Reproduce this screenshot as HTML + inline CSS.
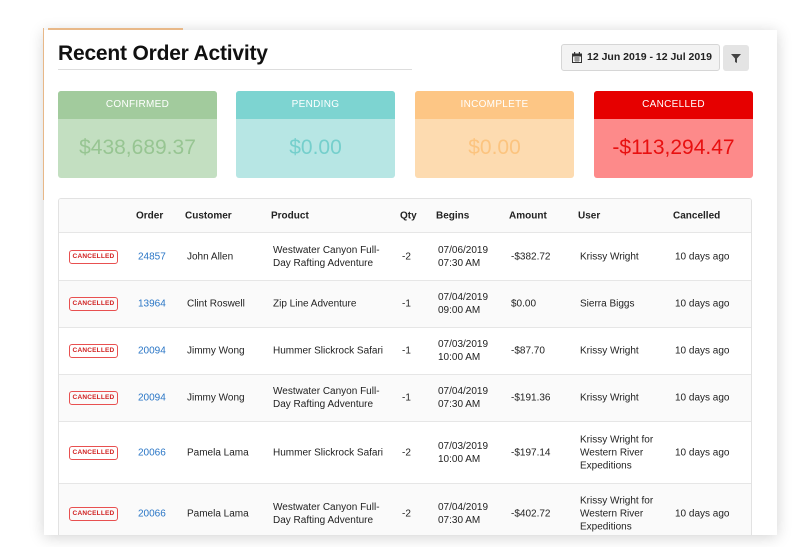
<!DOCTYPE html>
<html><head><meta charset="utf-8"><style>
*{margin:0;padding:0;box-sizing:border-box}
body{width:794px;height:547px;background:#fff;font-family:"Liberation Sans",sans-serif;position:relative;overflow:hidden;color:#222}
.card{position:absolute;left:44px;top:30px;width:733px;height:505px;background:#fff;box-shadow:0 2px 14px rgba(0,0,0,.18)}
.oline{position:absolute;left:43px;top:28px;width:1px;height:172px;background:#e8b888}
.otop{position:absolute;left:48px;top:28px;width:135px;height:2px;background:#e8b888}
h1{position:absolute;left:58px;top:42px;font-size:21px;font-weight:bold;color:#111;letter-spacing:-.2px}
.hl{position:absolute;left:58px;top:69px;width:354px;height:1px;background:#ddd}
.date{position:absolute;left:561px;top:44px;width:159px;height:27px;border:1px solid #d6d6d6;border-radius:3px;background:#f3f3f3;font-size:10.5px;font-weight:bold;line-height:25px;padding-left:25px}
.date svg{position:absolute;left:10px;top:7px}
.filt{position:absolute;left:723px;top:45px;width:26px;height:26px;background:#e4e4e4;border-radius:3px}
.filt svg{position:absolute;left:8px;top:8px}
.box{position:absolute;top:91px;width:159px;height:87px;border-radius:3px;overflow:hidden;text-align:center}
.box .t{height:28px;line-height:28px;font-size:10px;color:#fff;letter-spacing:.3px}
.box .v{height:59px;line-height:58px;font-size:21px}
.tbl{position:absolute;left:58px;top:198px;width:694px;height:337px;border:1px solid #e2e2e2;border-bottom:none;border-radius:3px 3px 0 0;overflow:hidden}
.row{position:absolute;left:0;width:694px;border-top:1px solid #e6e6e6;font-size:10px}
.row div{position:absolute;top:50%;transform:translateY(-50%);line-height:13px}
.hd div{font-weight:bold;font-size:10px}
.badge{left:10px;width:49px;height:14px;border:1px solid #e85050;border-radius:3px;color:#d02020;font-size:6.5px;font-weight:bold;text-align:center;line-height:12px!important;letter-spacing:.2px}
.o{color:#2a76c6}
</style></head><body>
<div class="card"></div>
<div class="oline"></div><div class="otop"></div>
<h1>Recent Order Activity</h1>
<div class="hl"></div>
<div class="date"><svg width="10" height="11" viewBox="0 0 10 11"><rect x="0.5" y="2" width="9" height="8.5" fill="none" stroke="#333"/><rect x="0.5" y="2" width="9" height="2.5" fill="#333"/><rect x="2" y="0" width="1.2" height="3" fill="#333"/><rect x="6.8" y="0" width="1.2" height="3" fill="#333"/><path d="M2 6h6M2 8h6M4 5v5M6 5v5" stroke="#333" stroke-width=".6"/></svg>12 Jun 2019 - 12 Jul 2019</div>
<div class="filt"><svg width="10" height="10" viewBox="0 0 10 10"><path d="M0 1h10L6 5.5V10L4 9V5.5z" fill="#444"/></svg></div>
<div class="box" style="left:58px;background:#c3dfc1"><div class="t" style="background:#a2cb9d">CONFIRMED</div><div class="v" style="color:#97c592">$438,689.37</div></div>
<div class="box" style="left:236px;background:#b7e6e4"><div class="t" style="background:#7dd4d1">PENDING</div><div class="v" style="color:#75cfcc">$0.00</div></div>
<div class="box" style="left:415px;background:#fddbb0"><div class="t" style="background:#fdc685">INCOMPLETE</div><div class="v" style="color:#fcc47f">$0.00</div></div>
<div class="box" style="left:594px;background:#fd8a8a"><div class="t" style="background:#e60000">CANCELLED</div><div class="v" style="color:#e81010">-$113,294.47</div></div>
<div class="tbl">
<div class="row hd" style="top:0;height:33px;border-top:none;background:#fafafa"><div style="left:77px">Order</div><div style="left:126px">Customer</div><div style="left:212px">Product</div><div style="left:341px">Qty</div><div style="left:377px">Begins</div><div style="left:450px">Amount</div><div style="left:519px">User</div><div style="left:614px">Cancelled</div></div>
<div class="row" style="top:33px;height:48px;background:#fff"><div class="badge">CANCELLED</div><div class="o" style="left:79px">24857</div><div style="left:128px">John Allen</div><div style="left:214px">Westwater Canyon Full-<br>Day Rafting Adventure</div><div style="left:343px">-2</div><div style="left:379px">07/06/2019<br>07:30 AM</div><div style="left:452px">-$382.72</div><div style="left:521px">Krissy Wright</div><div style="left:616px">10 days ago</div></div>
<div class="row" style="top:81px;height:47px;background:#fafafa"><div class="badge">CANCELLED</div><div class="o" style="left:79px">13964</div><div style="left:128px">Clint Roswell</div><div style="left:214px">Zip Line Adventure</div><div style="left:343px">-1</div><div style="left:379px">07/04/2019<br>09:00 AM</div><div style="left:452px">$0.00</div><div style="left:521px">Sierra Biggs</div><div style="left:616px">10 days ago</div></div>
<div class="row" style="top:128px;height:47px;background:#fff"><div class="badge">CANCELLED</div><div class="o" style="left:79px">20094</div><div style="left:128px">Jimmy Wong</div><div style="left:214px">Hummer Slickrock Safari</div><div style="left:343px">-1</div><div style="left:379px">07/03/2019<br>10:00 AM</div><div style="left:452px">-$87.70</div><div style="left:521px">Krissy Wright</div><div style="left:616px">10 days ago</div></div>
<div class="row" style="top:175px;height:47px;background:#fafafa"><div class="badge">CANCELLED</div><div class="o" style="left:79px">20094</div><div style="left:128px">Jimmy Wong</div><div style="left:214px">Westwater Canyon Full-<br>Day Rafting Adventure</div><div style="left:343px">-1</div><div style="left:379px">07/04/2019<br>07:30 AM</div><div style="left:452px">-$191.36</div><div style="left:521px">Krissy Wright</div><div style="left:616px">10 days ago</div></div>
<div class="row" style="top:222px;height:62px;background:#fff"><div class="badge">CANCELLED</div><div class="o" style="left:79px">20066</div><div style="left:128px">Pamela Lama</div><div style="left:214px">Hummer Slickrock Safari</div><div style="left:343px">-2</div><div style="left:379px">07/03/2019<br>10:00 AM</div><div style="left:452px">-$197.14</div><div style="left:521px">Krissy Wright for<br>Western River<br>Expeditions</div><div style="left:616px">10 days ago</div></div>
<div class="row" style="top:284px;height:60px;background:#fafafa"><div class="badge">CANCELLED</div><div class="o" style="left:79px">20066</div><div style="left:128px">Pamela Lama</div><div style="left:214px">Westwater Canyon Full-<br>Day Rafting Adventure</div><div style="left:343px">-2</div><div style="left:379px">07/04/2019<br>07:30 AM</div><div style="left:452px">-$402.72</div><div style="left:521px">Krissy Wright for<br>Western River<br>Expeditions</div><div style="left:616px">10 days ago</div></div>
</div>
</body></html>
